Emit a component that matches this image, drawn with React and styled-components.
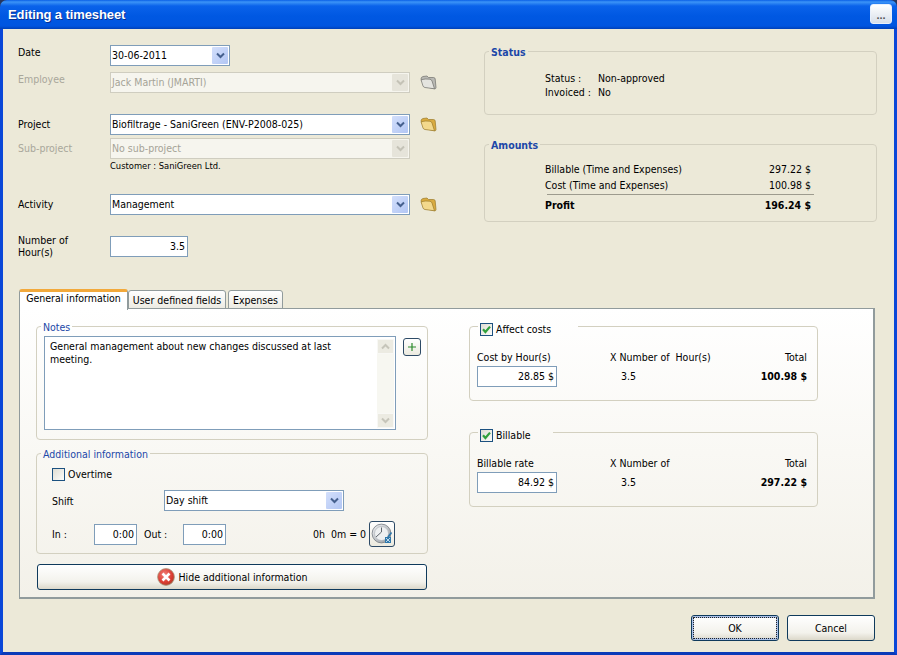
import React from "react";
import styled, { createGlobalStyle } from "styled-components";

const uiFont = `"DejaVu Sans Condensed", "DejaVu Sans", "Liberation Sans", sans-serif`;

const GlobalStyle = createGlobalStyle`
  html, body {
    margin: 0;
    padding: 0;
    background: #26365f;
  }
  body {
    font-family: ${uiFont};
    font-stretch: condensed;
    font-size: 10.5px;
    line-height: 14px;
    color: #000;
  }
  * { box-sizing: border-box; }
`;

const Window = styled.div`
  width: 897px;
  height: 655px;
  display: flex;
  flex-direction: column;
  border-radius: 7px 7px 0 0;
  overflow: hidden;
`;

const TitleBar = styled.div`
  height: 29px;
  flex: none;
  display: flex;
  align-items: center;
  justify-content: space-between;
  padding: 0 5px 0 8px;
  background: linear-gradient(
    to bottom,
    #0a5fe6 0,
    #3c94f7 2px,
    #0a62ea 6px,
    #0058e2 16px,
    #0055e0 26px,
    #0040b8 29px
  );
`;

const Title = styled.h1`
  margin: 0;
  font-family: "Liberation Sans", Arial, sans-serif;
  font-stretch: normal;
  font-size: 13px;
  font-weight: 700;
  letter-spacing: -0.1px;
  color: #fff;
  text-shadow: 1px 1px 0 #0a2f8f;
`;

const MenuButton = styled.button`
  width: 22px;
  height: 20px;
  padding: 0 0 2px;
  margin-bottom: 1px;
  border: 1px solid #e8f0fc;
  border-radius: 3px;
  background: linear-gradient(to bottom, #fff, #d7dfe9);
  color: #555;
  font: 700 11px "Liberation Sans", sans-serif;
  display: flex;
  align-items: flex-end;
  justify-content: center;
`;

const Body = styled.div`
  flex: 1;
  background: #ece9d8;
  border-left: 3px solid #0a47d8;
  border-right: 3px solid #0a47d8;
  border-bottom: 3px solid #0a3ab8;
  padding: 16px 19px 0 16px;
  display: flex;
  flex-direction: column;
`;

const TopArea = styled.div`
  height: 243px;
  display: flex;
  justify-content: space-between;
`;

const FormColumn = styled.div`
  margin-left: -1px;
  width: 430px;
`;

const FormRow = styled.div`
  display: flex;
  align-items: center;
  height: 21px;
  margin-top: ${(p) => p.$top || 0}px;
`;

const FieldLabel = styled.label`
  width: 92px;
  flex: none;
  line-height: ${(p) => (p.$tight ? 12 : 14)}px;
  padding-bottom: ${(p) => p.$lift ?? 1}px;
  color: ${(p) => (p.$muted ? "#a9a79b" : "#000")};
`;

const SelectBox = styled.div`
  width: ${(p) => p.$width}px;
  height: 21px;
  flex: none;
  display: flex;
  align-items: center;
  justify-content: space-between;
  padding: 1px;
  border: 1px solid ${(p) => (p.$disabled ? "#cfcdc0" : "#7f9db9")};
  background: ${(p) => (p.$disabled ? "#f6f5ee" : "#fff")};
  color: ${(p) => (p.$disabled ? "#a5a397" : "#000")};
`;

const SelectText = styled.span`
  padding-bottom: 1px;
`;

const SelectArrow = styled.span`
  width: 16px;
  height: 17px;
  flex: none;
  display: flex;
  align-items: center;
  justify-content: center;
  border-radius: 1px;
  background: ${(p) =>
    p.$disabled
      ? "#e6e4da"
      : "linear-gradient(135deg, #d3dffb, #b2c6f4)"};
`;

const TextInput = styled.input`
  width: ${(p) => p.$width}px;
  height: 21px;
  flex: none;
  padding: 0 2px 1px 0;
  border: 1px solid #7f9db9;
  background: #fff;
  color: #000;
  font-family: ${uiFont};
  font-stretch: condensed;
  font-size: 10.5px;
  text-align: right;
  outline: none;
`;

const FolderButton = styled.span`
  display: flex;
  margin-left: 10px;
`;

const CustomerLine = styled.div`
  margin: 0 0 0 92px;
  font-size: 9.3px;
  line-height: 13px;
  height: 13px;
`;

const InfoColumn = styled.div`
  width: 393px;
  margin: -1px -2px 0 0;
`;

const GroupBox = styled.fieldset`
  margin: ${(p) => p.$top || 0}px 0 0;
  padding: 0;
  min-width: 0;
  border: 1px solid #d3d0c0;
  border-radius: 4px;
`;

const GroupTitle = styled.legend`
  margin-left: ${(p) => p.$left ?? 4}px;
  padding: 0 ${(p) => p.$right ?? 2}px 0 2px;
  line-height: 14px;
  font-weight: ${(p) => (p.$bold ? 700 : 400)};
  color: ${(p) => (p.$plain ? "#000" : "#1c47a8")};
  display: flex;
  align-items: center;
  position: relative;
  top: ${(p) => (p.$plain ? 3 : 1)}px;
`;

const GroupLabel = styled.span`
  margin-left: 3px;
`;

const StatusBody = styled.div`
  padding: 13px 0 15px 60px;
`;

const StatusLine = styled.div`
  display: flex;
`;

const StatusKey = styled.span`
  width: 53px;
`;

const AmountsBody = styled.div`
  padding: 11px 62px 7px 60px;
`;

const AmountLine = styled.div`
  display: flex;
  justify-content: space-between;
  padding-right: 3px;
  margin-bottom: 2px;
  font-weight: ${(p) => (p.$bold ? 700 : 400)};
`;

const AmountRule = styled.hr`
  margin: 1px 0 3px 2px;
  border: 0;
  border-top: 1px solid #9d9b8e;
`;

const TabStrip = styled.div`
  height: 21px;
  flex: none;
  display: flex;
  align-items: flex-end;
  position: relative;
  z-index: 1;
`;

const Tab = styled.div`
  height: ${(p) => (p.$active ? 21 : 19)}px;
  width: ${(p) => p.$width}px;
  margin-left: ${(p) => p.$gap || 0}px;
  margin-bottom: ${(p) => (p.$active ? -1 : 0)}px;
  flex: none;
  display: flex;
  align-items: center;
  justify-content: center;
  padding-bottom: ${(p) => (p.$active ? 6 : 0)}px;
  border: 1px solid #919b9c;
  border-bottom: ${(p) => (p.$active ? "0" : "1px solid #919b9c")};
  border-top: ${(p) => (p.$active ? "3px solid #f2a93b" : "1px solid #919b9c")};
  border-radius: 3px 3px 0 0;
  background: ${(p) =>
    p.$active ? "#fff" : "linear-gradient(to bottom, #fff, #ecebe3)"};
`;

const TabPanel = styled.div`
  width: 856px;
  height: 291px;
  flex: none;
  display: flex;
  margin-top: -1px;
  padding: 10px 0 0 16px;
  border: 1px solid #919b9c;
  border-bottom-width: 2px;
  border-right-width: 2px;
  background: linear-gradient(to bottom, #fff, #f3f1e9);
`;

const PanelLeft = styled.div`
  width: 392px;
  flex: none;
`;

const PanelRight = styled.div`
  width: 349px;
  flex: none;
  margin-left: 41px;
`;

const NotesBody = styled.div`
  display: flex;
  align-items: flex-start;
  gap: 7px;
  padding: 3px 6px 9px 7px;
`;

const NotesArea = styled.div`
  width: 352px;
  height: 94px;
  flex: none;
  display: flex;
  justify-content: space-between;
  border: 1px solid #7f9db9;
  background: #fff;
`;

const NotesText = styled.div`
  width: 320px;
  padding: 3px 0 0 5px;
  line-height: 13px;
`;

const ScrollTrack = styled.div`
  width: 17px;
  margin: 2px 1px 1px 0;
  display: flex;
  flex-direction: column;
  justify-content: space-between;
  background: #f7f7f1;
`;

const ScrollEnd = styled.span`
  height: 15px;
  display: flex;
  align-items: center;
  justify-content: center;
  background: #ecebe2;
  border: 1px solid #f8f8f5;
`;

const SmallButton = styled.button`
  width: 18px;
  height: 18px;
  margin-top: 2px;
  padding: 0;
  display: flex;
  align-items: center;
  justify-content: center;
  border: 1px solid #2d4a66;
  border-radius: 3px;
  background: linear-gradient(to bottom, #fff, #eceadf);
`;

const AdditionalBody = styled.div`
  padding: 7px 0 6px 15px;
`;

const CheckRow = styled.div`
  height: 14px;
  display: flex;
  align-items: center;
  gap: 3px;
`;

const CheckBox = styled.span`
  width: 13px;
  height: 13px;
  flex: none;
  display: flex;
  align-items: center;
  justify-content: center;
  border: 1px solid #1c5180;
  background: linear-gradient(135deg, #dfddd3, #fcfcfa);
`;

const ShiftRow = styled.div`
  display: flex;
  align-items: center;
  margin-top: 9px;
`;

const ShiftLabel = styled.span`
  width: 112px;
`;

const TimeRow = styled.div`
  height: 26px;
  display: flex;
  align-items: center;
  margin-top: 10px;
`;

const TimeLabel = styled.span`
  width: ${(p) => p.$width}px;
  padding-left: ${(p) => p.$indent || 0}px;
  flex: none;
`;

const TimeTotal = styled.span`
  margin-left: 87px;
  width: 56px;
  white-space: pre;
`;

const ClockButton = styled.button`
  width: 26px;
  height: 26px;
  padding: 0;
  display: flex;
  align-items: center;
  justify-content: center;
  border: 1px solid #2d4a66;
  border-radius: 3px;
  background: linear-gradient(to bottom, #fff, #eceadf);
`;

const WideButton = styled.button`
  width: 390px;
  height: 26px;
  margin: 10px 0 0 1px;
  padding: 0;
  display: flex;
  align-items: center;
  justify-content: center;
  gap: 4px;
  color: #000;
  font-family: ${uiFont};
  font-stretch: condensed;
  font-size: 10.5px;
  border: 1px solid #0f3a5c;
  border-radius: 3px;
  background: linear-gradient(to bottom, #fff, #f3f2ec 70%, #dcd8ca);
`;

const RateBody = styled.div`
  display: grid;
  grid-template-columns: 133px 1fr auto;
  grid-template-rows: 14px 21px;
  row-gap: 2px;
  align-items: center;
  padding: 17px 10px 13px 7px;
  white-space: pre;
`;

const RateValue = styled.span`
  padding: 0 0 1px 11px;
`;

const RateTotal = styled.span`
  text-align: right;
  padding-bottom: ${(p) => (p.$bold ? 1 : 0)}px;
  font-weight: ${(p) => (p.$bold ? 700 : 400)};
`;

const Footer = styled.div`
  display: flex;
  justify-content: flex-end;
  gap: 8px;
  margin-top: 16px;
`;

const DialogButton = styled.button`
  width: 88px;
  height: 26px;
  padding: 0;
  color: #000;
  font-family: ${uiFont};
  font-stretch: condensed;
  font-size: 10.5px;
  border: 1px solid #0f3a5c;
  border-radius: 3px;
  background: linear-gradient(to bottom, #fff, #f3f2ec 70%, #dcd8ca);
  box-shadow: ${(p) =>
    p.$focused ? "inset 0 0 0 2px #a9bfe6" : "none"};
  outline: ${(p) => (p.$focused ? "1px dotted #222" : "none")};
  outline-offset: ${(p) => (p.$focused ? "-3px" : "0")};
`;

const Chevron = ({ up, color }) => (
  <svg width="9" height="7" viewBox="0 0 9 7">
    <path
      d={up ? "M1 5.5 L4.5 2 L8 5.5" : "M1 1.5 L4.5 5 L8 1.5"}
      fill="none"
      stroke={color}
      strokeWidth="2"
    />
  </svg>
);

const Select = ({ width, disabled, children }) => (
  <SelectBox $width={width} $disabled={disabled}>
    <SelectText>{children}</SelectText>
    <SelectArrow $disabled={disabled}>
      <Chevron color={disabled ? "#c4c2b6" : "#45608e"} />
    </SelectArrow>
  </SelectBox>
);

const Folder = ({ disabled }) => {
  const back = disabled ? "#b9b9b4" : "#d9ab3f";
  const front = disabled ? "#e4e4df" : "#f3d98c";
  const line = disabled ? "#70706b" : "#9a7a2a";
  return (
    <FolderButton>
      <svg width="17" height="15" viewBox="0 0 17 15">
        <path
          d="M1 4 Q1 2 3 1.5 L7 1 L8.5 2.5 L13.5 2.5 Q15 2.5 15.2 4 L16 12.5 Q16 14 14.5 13.8 L5 11.5 Z"
          fill={back}
          stroke={line}
          strokeWidth="0.7"
        />
        <path
          d="M1 4.8 Q5 3.5 10 4.2 Q11.5 4.5 12 6 L14.5 13.8 L5 12.5 Q3.5 12.3 3 11 Z"
          fill={front}
          stroke={line}
          strokeWidth="0.7"
        />
      </svg>
    </FolderButton>
  );
};

const Check = () => (
  <svg width="11" height="11" viewBox="0 0 11 11">
    <path
      d="M2 5.2 L4.4 8 L9 2.6"
      fill="none"
      stroke="#31a03c"
      strokeWidth="2.2"
    />
  </svg>
);

const ClockIcon = () => (
  <svg width="22" height="22" viewBox="0 0 22 22">
    <defs>
      <linearGradient id="clockRing" x1="0" y1="0" x2="1" y2="1">
        <stop offset="0" stopColor="#f4f5f6" />
        <stop offset="1" stopColor="#8f959c" />
      </linearGradient>
    </defs>
    <circle cx="10.5" cy="10.5" r="9.4" fill="url(#clockRing)" stroke="#767c84" strokeWidth="0.8" />
    <circle cx="10.5" cy="10.5" r="7" fill="#eef0f1" stroke="#a8adb3" strokeWidth="0.6" />
    <path d="M5 14 L10.5 9 L10.5 4.5" stroke="#5f656c" strokeWidth="1" fill="none" />
    <rect x="14" y="14" width="6" height="6" fill="#2f78ab" />
    <path d="M15 15 L19 19 M19 15 L15 19" stroke="#cfe2f0" strokeWidth="0.9" />
    <path d="M17 14 L20.5 9.5" stroke="#2f78ab" strokeWidth="1.6" />
  </svg>
);

const CloseIcon = () => (
  <svg width="18" height="18" viewBox="0 0 18 18">
    <defs>
      <radialGradient id="redBall" cx="40%" cy="35%" r="70%">
        <stop offset="0" stopColor="#f2827a" />
        <stop offset="0.7" stopColor="#d8392e" />
        <stop offset="1" stopColor="#a8442c" />
      </radialGradient>
    </defs>
    <circle cx="9" cy="9" r="8.4" fill="url(#redBall)" stroke="#a89a80" strokeWidth="0.8" />
    <path d="M5.5 5.5 L12.5 12.5 M12.5 5.5 L5.5 12.5" stroke="#fff" strokeWidth="2.6" />
  </svg>
);

const RateGroup = ({ top, title, right, rateLabel, numberLabel, rate, total }) => (
  <GroupBox $top={top}>
    <GroupTitle $left={8} $right={right} $plain>
      <CheckBox>
        <Check />
      </CheckBox>
      <GroupLabel>{title}</GroupLabel>
    </GroupTitle>
    <RateBody>
      <span>{rateLabel}</span>
      <span>{numberLabel}</span>
      <RateTotal>Total</RateTotal>
      <TextInput $width={80} defaultValue={rate} />
      <RateValue>3.5</RateValue>
      <RateTotal $bold>{total}</RateTotal>
    </RateBody>
  </GroupBox>
);

export default function App() {
  return (
    <Window>
      <GlobalStyle />
      <TitleBar>
        <Title>Editing a timesheet</Title>
        <MenuButton>...</MenuButton>
      </TitleBar>
      <Body>
        <TopArea>
          <FormColumn>
            <FormRow>
              <FieldLabel $lift={8}>Date</FieldLabel>
              <Select width={120}>30-06-2011</Select>
            </FormRow>
            <FormRow $top={6}>
              <FieldLabel $muted $lift={8}>
                Employee
              </FieldLabel>
              <Select width={300} disabled>
                Jack Martin (JMARTI)
              </Select>
              <Folder disabled />
            </FormRow>
            <FormRow $top={21}>
              <FieldLabel>Project</FieldLabel>
              <Select width={300}>Biofiltrage - SaniGreen (ENV-P2008-025)</Select>
              <Folder />
            </FormRow>
            <FormRow $top={3}>
              <FieldLabel $muted>Sub-project</FieldLabel>
              <Select width={300} disabled>
                No sub-project
              </Select>
            </FormRow>
            <CustomerLine>Customer : SaniGreen Ltd.</CustomerLine>
            <FormRow $top={22}>
              <FieldLabel>Activity</FieldLabel>
              <Select width={300}>Management</Select>
              <Folder />
            </FormRow>
            <FormRow $top={21}>
              <FieldLabel $tight $lift={1}>
                Number of
                <br />
                Hour(s)
              </FieldLabel>
              <TextInput $width={78} defaultValue="3.5" />
            </FormRow>
          </FormColumn>
          <InfoColumn>
            <GroupBox>
              <GroupTitle $bold>Status</GroupTitle>
              <StatusBody>
                <StatusLine>
                  <StatusKey>Status :</StatusKey>
                  <span>Non-approved</span>
                </StatusLine>
                <StatusLine>
                  <StatusKey>Invoiced :</StatusKey>
                  <span>No</span>
                </StatusLine>
              </StatusBody>
            </GroupBox>
            <GroupBox $top={22}>
              <GroupTitle $bold>Amounts</GroupTitle>
              <AmountsBody>
                <AmountLine>
                  <span>Billable (Time and Expenses)</span>
                  <span>297.22 $</span>
                </AmountLine>
                <AmountLine>
                  <span>Cost (Time and Expenses)</span>
                  <span>100.98 $</span>
                </AmountLine>
                <AmountRule />
                <AmountLine $bold>
                  <span>Profit</span>
                  <span>196.24 $</span>
                </AmountLine>
              </AmountsBody>
            </GroupBox>
          </InfoColumn>
        </TopArea>
        <TabStrip>
          <Tab $active $width={109}>
            General information
          </Tab>
          <Tab $width={98}>User defined fields</Tab>
          <Tab $width={55} $gap={2}>
            Expenses
          </Tab>
        </TabStrip>
        <TabPanel>
          <PanelLeft>
            <GroupBox>
              <GroupTitle>Notes</GroupTitle>
              <NotesBody>
                <NotesArea>
                  <NotesText>
                    General management about new changes discussed at last meeting.
                  </NotesText>
                  <ScrollTrack>
                    <ScrollEnd>
                      <Chevron up color="#c6c5ba" />
                    </ScrollEnd>
                    <ScrollEnd>
                      <Chevron color="#c6c5ba" />
                    </ScrollEnd>
                  </ScrollTrack>
                </NotesArea>
                <SmallButton aria-label="Add note">
                  <svg width="10" height="10" viewBox="0 0 10 10">
                    <path d="M5 1 V9 M1 5 H9" stroke="#2c8a2c" strokeWidth="1.2" />
                  </svg>
                </SmallButton>
              </NotesBody>
            </GroupBox>
            <GroupBox $top={6}>
              <GroupTitle>Additional information</GroupTitle>
              <AdditionalBody>
                <CheckRow>
                  <CheckBox />
                  Overtime
                </CheckRow>
                <ShiftRow>
                  <ShiftLabel>Shift</ShiftLabel>
                  <Select width={180}>Day shift</Select>
                </ShiftRow>
                <TimeRow>
                  <TimeLabel $width={42}>In :</TimeLabel>
                  <TextInput $width={43} defaultValue="0:00" />
                  <TimeLabel $width={46} $indent={7}>
                    Out :
                  </TimeLabel>
                  <TextInput $width={43} defaultValue="0:00" />
                  <TimeTotal>0h  0m = 0</TimeTotal>
                  <ClockButton aria-label="Calculate time">
                    <ClockIcon />
                  </ClockButton>
                </TimeRow>
              </AdditionalBody>
            </GroupBox>
            <WideButton>
              <CloseIcon />
              Hide additional information
            </WideButton>
          </PanelLeft>
          <PanelRight>
            <RateGroup
              title="Affect costs"
              right={27}
              rateLabel="Cost by Hour(s)"
              numberLabel="X Number of  Hour(s)"
              rate="28.85 $"
              total="100.98 $"
            />
            <RateGroup
              top={24}
              title="Billable"
              right={22}
              rateLabel="Billable rate"
              numberLabel="X Number of"
              rate="84.92 $"
              total="297.22 $"
            />
          </PanelRight>
        </TabPanel>
        <Footer>
          <DialogButton $focused>OK</DialogButton>
          <DialogButton>Cancel</DialogButton>
        </Footer>
      </Body>
    </Window>
  );
}
